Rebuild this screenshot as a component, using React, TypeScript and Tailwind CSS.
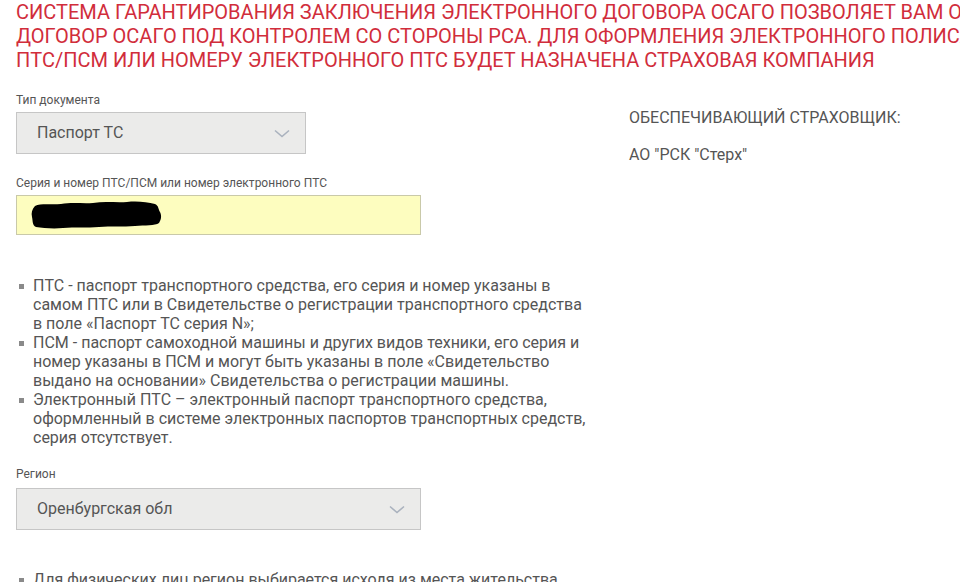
import React from "react";

const Chevron = () => (
  <svg width="16" height="9" viewBox="0 0 16 9" className="shrink-0">
    <path d="M1 1.5 L8 7.5 L15 1.5" fill="none" stroke="#aab2be" strokeWidth="1.6" />
  </svg>
);

const Select = ({ value, className }: { value: string; className: string }) => (
  <div
    className={`flex items-center justify-between bg-[#ebebea] border border-[#c6c6c6] pl-5 pr-[15px] text-[16px] text-[#555] ${className}`}
  >
    <span>{value}</span>
    <Chevron />
  </div>
);

const Bullet = ({ children }: { children: React.ReactNode }) => (
  <li className="relative pl-[17px]">
    <span className="absolute left-[3px] top-[8px] w-[5px] h-[5px] bg-[#8a8a8a]" />
    {children}
  </li>
);

const App = () => {
  return (
    <div
      className="w-[960px] h-[582px] overflow-hidden bg-white"
      style={{ fontFamily: "Roboto, 'Liberation Sans', sans-serif" }}
    >
      {/* заголовок */}
      <div className="pl-4 text-[20px] leading-[24px] text-[#d12d3b] whitespace-nowrap">
        <p>СИСТЕМА ГАРАНТИРОВАНИЯ ЗАКЛЮЧЕНИЯ ЭЛЕКТРОННОГО ДОГОВОРА ОСАГО ПОЗВОЛЯЕТ ВАМ ОФОРМИТЬ</p>
        <p>ДОГОВОР ОСАГО ПОД КОНТРОЛЕМ СО СТОРОНЫ РСА. ДЛЯ ОФОРМЛЕНИЯ ЭЛЕКТРОННОГО ПОЛИСА ПО НОМЕРУ</p>
        <p>ПТС/ПСМ ИЛИ НОМЕРУ ЭЛЕКТРОННОГО ПТС БУДЕТ НАЗНАЧЕНА СТРАХОВАЯ КОМПАНИЯ</p>
      </div>

      <div className="flex pl-4">
        <div className="w-[590px] shrink-0">
          <p className="mt-5 text-[12px] leading-[16px] text-[#555]">Тип документа</p>
          <Select value="Паспорт ТС" className="mt-1 w-[290px] h-[42px]" />

          <p className="mt-[21px] text-[12px] leading-[16px] text-[#555]">
            Серия и номер ПТС/ПСМ или номер электронного ПТС
          </p>
          <div className="mt-1 w-[405px] h-[40px] bg-[#fdfdbf] border border-[#c9c9a9] flex items-center pl-[14px]">
            <svg width="132" height="30" viewBox="0 0 132 30">
              <path
                d="M4 6 C10 3 20 5 30 4 C42 2 52 4 62 3 C74 1 86 3 96 2 C106 1 116 2 124 4 C128 6 127 9 129 12 C131 16 130 20 128 23 C124 26 114 25 104 26 C92 27 80 26 68 27 C56 28 44 27 32 28 C22 29 12 28 5 27 C1 25 2 21 1 17 C0 13 1 9 4 6 Z"
                fill="#000"
              />
            </svg>
          </div>

          <ul className="mt-[41px] text-[16px] leading-[19px] text-[#555] w-[573px]">
            <Bullet>
              ПТС - паспорт транспортного средства, его серия и номер указаны в самом ПТС или в
              Свидетельстве о регистрации транспортного средства в поле «Паспорт ТС серия N»;
            </Bullet>
            <Bullet>
              ПСМ - паспорт самоходной машины и других видов техники, его серия и номер указаны в ПСМ
              и могут быть указаны в поле «Свидетельство выдано на основании» Свидетельства о
              регистрации машины.
            </Bullet>
            <Bullet>
              Электронный ПТС – электронный паспорт транспортного средства, оформленный в системе
              электронных паспортов транспортных средств, серия отсутствует.
            </Bullet>
          </ul>

          <p className="mt-[19px] text-[12px] leading-[16px] text-[#555]">Регион</p>
          <Select value="Оренбургская обл" className="mt-1.5 w-[405px] h-[42px]" />

          <ul className="mt-[40px] text-[16px] leading-[19px] text-[#555] w-[573px]">
            <Bullet>
              Для физических лиц регион выбирается исходя из места жительства собственника
              транспортного средства
            </Bullet>
          </ul>
        </div>

        <div className="pl-[23px] pt-[34px] text-[16px] text-[#555]">
          <p className="leading-[24px]">ОБЕСПЕЧИВАЮЩИЙ СТРАХОВЩИК:</p>
          <p className="mt-[13px] leading-[24px]">АО "РСК "Стерх"</p>
        </div>
      </div>
    </div>
  );
};

export default App;
